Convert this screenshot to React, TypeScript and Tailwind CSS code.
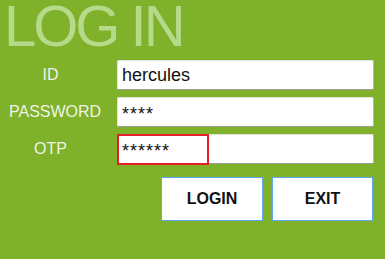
import React from "react";

const rows = [
  { label: "ID", value: "hercules", mask: false },
  { label: "PASSWORD", value: "****", mask: true },
  { label: "OTP", value: "******", mask: true },
];

export default function App() {
  return (
    <div
      className="w-[385px] h-[259px] bg-[#7fb12b] overflow-hidden"
      style={{ fontFamily: '"Liberation Sans", Arial, sans-serif' }}
    >
      {/* Title */}
      <h1 className="pl-[4px] text-[58px] leading-[52px] tracking-[-3px] text-[#b6d98a] font-normal h-[52px]">
        LOG IN
      </h1>

      {/* Form */}
      <div className="mt-[8px] flex flex-col gap-[7px] pr-[11px]">
        {rows.map((row) => (
          <div key={row.label} className="flex items-center">
            <div
              className={
                row.label === "PASSWORD"
                  ? "w-[117px] pl-[9px] text-[16px] text-[#eef4e4]"
                  : "w-[117px] pr-[16px] text-center text-[16px] text-[#eef4e4]"
              }
            >
              {row.label}
            </div>
            <div className="relative flex-1">
              <div
                className={
                  "h-[30px] bg-white rounded-[2px] border border-[#e2e2e2] border-b-[#9c9c9c] border-r-[#b4b4b4] flex items-center pl-[4px] text-[#111] " +
                  (row.mask ? "text-[18px] tracking-[1px] pt-[4px]" : "text-[18px]")
                }
              >
                {row.value}
              </div>
              {row.label === "OTP" && (
                <div className="absolute left-0 top-0 w-[92px] h-[31px] border-2 border-[#e3202a]" />
              )}
            </div>
          </div>
        ))}
      </div>

      {/* Buttons */}
      <div className="mt-[13px] flex justify-end gap-[9px] pr-[12px]">
        <button className="w-[102px] h-[44px] bg-white border border-[#5ea9f2] text-[16px] font-bold text-[#111]">
          LOGIN
        </button>
        <button className="w-[101px] h-[44px] bg-white border border-[#5ea9f2] text-[16px] font-bold text-[#111]">
          EXIT
        </button>
      </div>
    </div>
  );
}
